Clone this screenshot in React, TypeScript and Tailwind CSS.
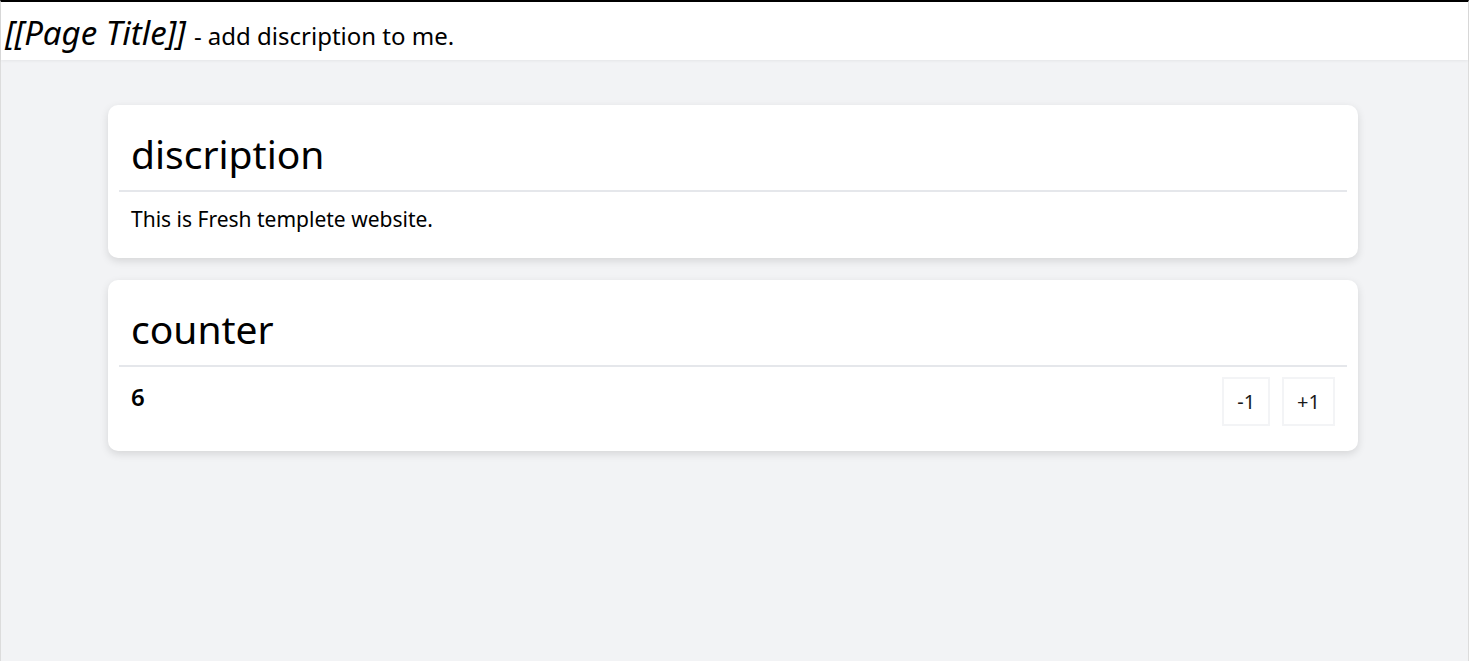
import { useState } from "react";

function Card({ title, children }: { title: string; children: React.ReactNode }) {
  return (
    <section className="rounded-[10px] bg-white px-[11px] pt-[11px] pb-[11px] shadow-[0_3px_8px_rgba(0,0,0,0.12)]">
      <h2 className="border-b-2 border-[#e5e7eb] px-3 pt-2 pb-[6px] text-[39px] leading-[60px] text-black">
        {title}
      </h2>
      {children}
    </section>
  );
}

export default function App() {
  const [count, setCount] = useState(6);

  return (
    <div
      className="min-h-screen border-t-2 border-x border-t-black border-x-[#dcdcdc] bg-[#f2f3f5]"
      style={{ fontFamily: '"Noto Sans", "Open Sans", sans-serif' }}
    >
      {/* header */}
      <header className="flex h-[58px] items-baseline bg-white px-[4px] pt-2 shadow-[0_1px_3px_rgba(0,0,0,0.06)]">
        <h1 className="text-[33px] leading-[45px] italic text-black">[[Page Title]]</h1>
        <span className="ml-2 text-[24px] text-black">- add discription to me.</span>
      </header>

      <main className="ml-[107px] mr-[110px] mt-[45px] flex flex-col gap-[22px]">
        <Card title="discription">
          <p className="px-3 pt-3 pb-[13px] text-[21px] leading-[30px] text-black">
            This is Fresh templete website.
          </p>
        </Card>

        <Card title="counter">
          <div className="flex items-start justify-between px-3 pt-[10px] pb-[14px]">
            <span className="pt-[5px] text-[24px] leading-[30px] font-semibold text-black">{count}</span>
            <div className="flex gap-3">
              <button
                className="h-[49px] border-2 border-[#f3f4f6] px-[13px] text-[20px] leading-[30px] text-[#1a1a1a]"
                onClick={() => setCount(count - 1)}
              >
                -1
              </button>
              <button
                className="h-[49px] border-2 border-[#f3f4f6] px-[13px] text-[20px] leading-[30px] text-[#1a1a1a]"
                onClick={() => setCount(count + 1)}
              >
                +1
              </button>
            </div>
          </div>
        </Card>
      </main>
    </div>
  );
}
